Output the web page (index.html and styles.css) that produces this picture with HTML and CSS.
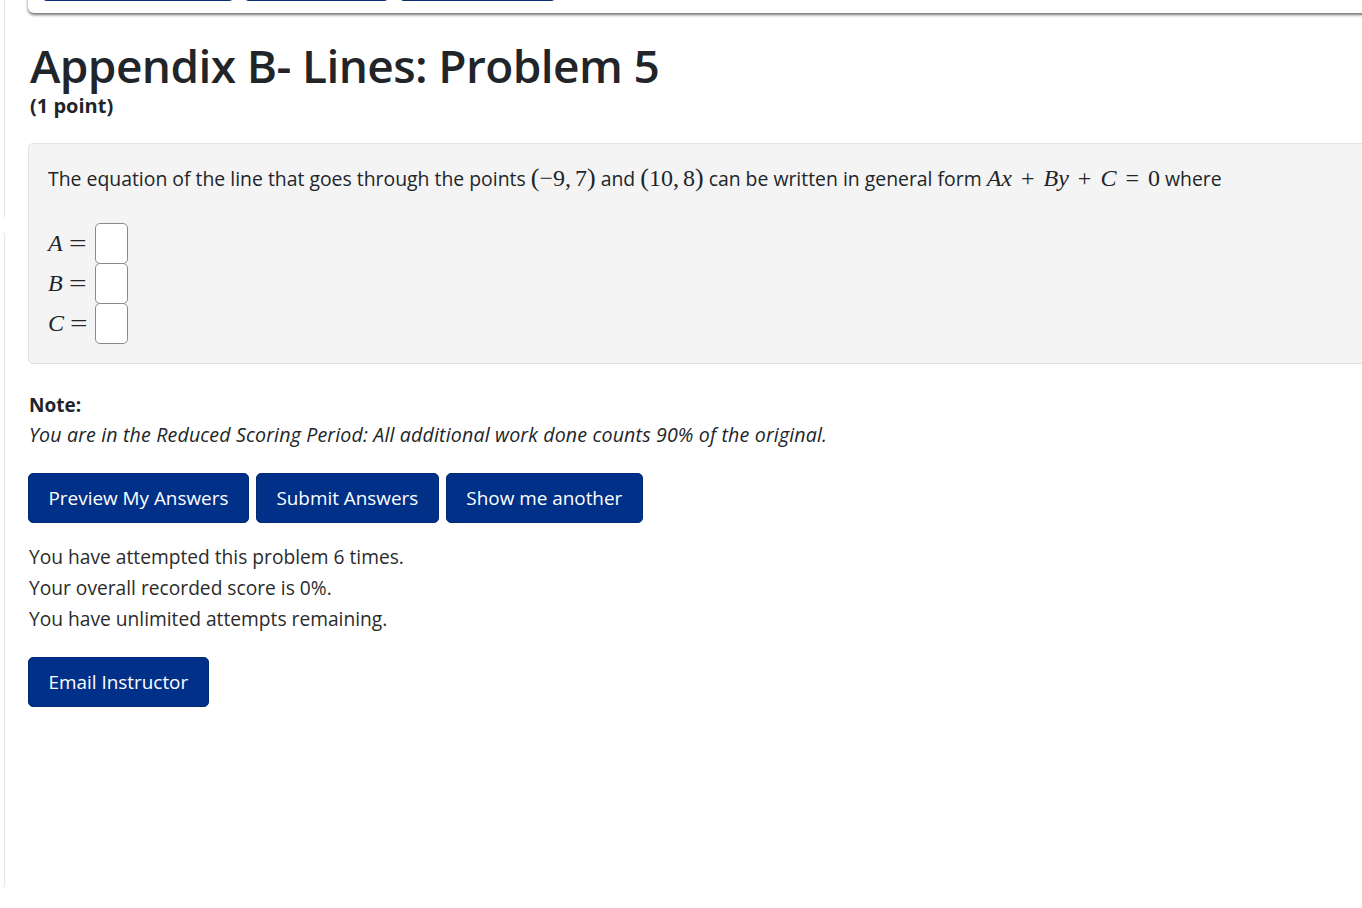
FILE: index.html
```html
<!DOCTYPE html>
<html lang="en">
<head>
<meta charset="utf-8">
<title>Appendix B- Lines: Problem 5</title>
<link rel="stylesheet" href="styles.css">
</head>
<body>
<div class="page">
  <div class="rail">
    <div class="rail-top"></div>
    <div class="rail-bottom"></div>
  </div>
  <main class="main">
    <div class="toolbar">
      <span class="tb-btn w1"></span>
      <span class="tb-btn w2"></span>
      <span class="tb-btn w3"></span>
    </div>
    <h1 class="title">Appendix B- Lines: Problem 5</h1>
    <div class="points">(1 point)</div>
    <div class="problem">
      <p class="statement">The equation of the line that goes through the points <span class="m"><span class="p">(</span>−9<span class="c">,</span>7<span class="p">)</span></span> and <span class="m"><span class="p">(</span>10<span class="c">,</span>8<span class="p">)</span></span> can be written in general form <span class="m"><i>Ax</i><span class="op">+</span><i>By</i><span class="op">+</span><i>C</i><span class="op">=</span>0</span> where</p>
      <div class="answers">
        <div class="ans"><span class="m lbl"><i>A</i><span class="eq">=</span></span><span class="box"></span></div>
        <div class="ans"><span class="m lbl"><i>B</i><span class="eq">=</span></span><span class="box"></span></div>
        <div class="ans"><span class="m lbl"><i>C</i><span class="eq">=</span></span><span class="box"></span></div>
      </div>
    </div>
    <div class="note">
      <div class="note-head">Note:</div>
      <div class="note-text">You are in the Reduced Scoring Period: All additional work done counts 90% of the original.</div>
    </div>
    <div class="actions">
      <button class="btn">Preview My Answers</button>
      <button class="btn">Submit Answers</button>
      <button class="btn">Show me another</button>
    </div>
    <div class="status">
      <div>You have attempted this problem 6 times.</div>
      <div>Your overall recorded score is 0%.</div>
      <div>You have unlimited attempts remaining.</div>
    </div>
    <div class="actions">
      <button class="btn">Email Instructor</button>
    </div>
  </main>
</div>
</body>
</html>
```
FILE: styles.css
```css
* { box-sizing: border-box; }
html, body { margin: 0; padding: 0; background: #fff; }
body {
  font-family: "Open Sans", "Noto Sans", sans-serif;
  color: #212529;
  font-size: 19px;
  overflow: hidden;
}
.page {
  display: flex;
  min-height: 908px;
}
.rail {
  width: 5px;
  display: flex;
  flex-direction: column;
  gap: 14px;
  padding-bottom: 20px;
}
.rail-top {
  height: 218px;
  border-right: 1px solid #e6e6e6;
  border-bottom-right-radius: 3px;
}
.rail-bottom {
  flex: 1;
  border-right: 1px solid #e6e6e6;
  border-top-right-radius: 4px;
  border-bottom-right-radius: 4px;
}
.main {
  position: relative;
  flex: 1;
  padding-left: 23px;
  padding-top: 40px;
}
.toolbar {
  position: absolute;
  left: 23px;
  right: -20px;
  top: -40px;
  height: 53px;
  background: #fff;
  border-radius: 6px;
  box-shadow: 0 2px 3px rgba(0,0,0,0.55);
  display: flex;
  align-items: flex-end;
  gap: 12px;
  padding: 0 0 12px 15px;
}
.tb-btn {
  display: block;
  height: 30px;
  background: #0b2b70;
  border-radius: 4px;
}
.tb-btn.w1 { width: 190px; }
.tb-btn.w2 { width: 143px; }
.tb-btn.w3 { width: 155px; }
.title {
  margin: 0 0 0 2px;
  font-size: 46px;
  font-weight: 600;
  line-height: 51px;
  color: #212529;
  letter-spacing: -0.6px;
}
.points {
  margin: 3px 0 0 2px;
  font-weight: 700;
  font-size: 20px;
  line-height: 24px;
}
.problem {
  margin-top: 25px;
  margin-right: -30px;
  background: #f4f4f4;
  border: 1px solid #e2e2e2;
  border-radius: 5px;
  padding: 19px 19px 20px;
}
.statement {
  margin: 0 0 29px;
  font-size: 19.4px;
  line-height: 30px;
}
.m {
  font-family: "Liberation Serif", "DejaVu Serif", serif;
  font-size: 24px;
  white-space: nowrap;
}
.m i { font-style: italic; }
.m .p { font-size: 26px; }
.m .c { margin-right: 4px; }
.m .op { margin: 0 9px; }
.answers {
  display: flex;
  flex-direction: column;
}
.ans {
  display: flex;
  align-items: center;
  height: 40px;
}
.lbl {
  width: 47px;
  font-size: 24px;
}
.lbl .eq { margin-left: 6px; display: inline-block; transform: scaleX(1.3); transform-origin: left center; }
.box {
  display: block;
  width: 33px;
  height: 41px;
  background: #fff;
  border: 1px solid #8a8a8a;
  border-radius: 5px;
}
.note {
  margin-top: 28px;
  margin-left: 1px;
}
.note-head {
  font-weight: 700;
  font-size: 19px;
  line-height: 26px;
}
.note-text {
  font-style: italic;
  font-size: 19.6px;
  line-height: 34px;
  letter-spacing: 0.15px;
}
.actions {
  display: flex;
  gap: 7px;
  margin-top: 21px;
}
.btn {
  font-family: inherit;
  font-size: 18.9px;
  color: #fff;
  background: #003087;
  border: 1px solid #002a76;
  border-radius: 5px;
  height: 50px;
  padding: 0 19.5px;
  cursor: pointer;
}
.status {
  margin-top: 18px;
  margin-left: 1px;
  font-size: 19.2px;
  line-height: 31px;
  color: #2b2b2b;
}
.status + .actions { margin-top: 23px; }
```
